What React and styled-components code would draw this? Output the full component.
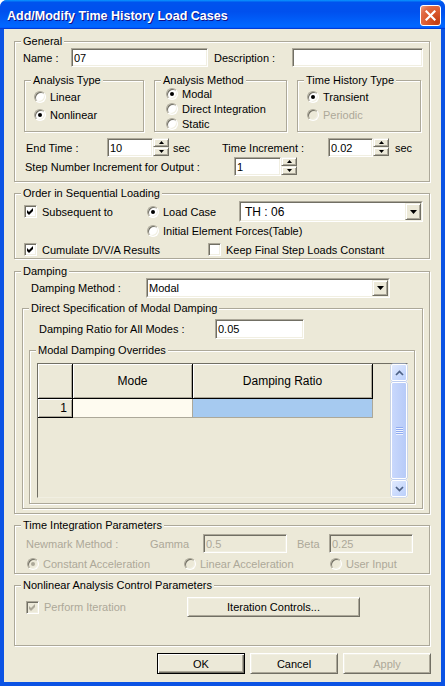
import React from 'react';
import styled, { createGlobalStyle, css } from 'styled-components';

const GlobalStyle = createGlobalStyle`
  html, body { margin: 0; padding: 0; background: #fff; }
  body {
    font-family: "Liberation Sans", Arial, sans-serif;
    font-size: 11px;
    color: #000;
  }
  * { box-sizing: border-box; }
`;

// window chrome
const Window = styled.div`
  width: 445px;
  height: 686px;
  display: flex;
  flex-direction: column;
  background: #0b53e4;
  border-radius: 7px 7px 0 0;
  overflow: hidden;
`;

const TitleBar = styled.div`
  height: 29px;
  flex-shrink: 0;
  display: flex;
  align-items: center;
  justify-content: space-between;
  padding: 2px 4px 0 7px;
  background: linear-gradient(180deg, #0997ff, #0053ee 8%, #0050ee 40%, #0066ff 88%, #0066ff 93%, #005bff 95%, #003dd7 96%, #003dd7);
`;

const Title = styled.span`
  font-family: "Liberation Sans", Arial, sans-serif;
  font-weight: bold;
  font-size: 12.5px;
  color: #fff;
  text-shadow: 1px 1px 0 #0f1089;
  white-space: nowrap;
`;

const CloseBtn = styled.div`
  width: 21px;
  height: 21px;
  border: 1px solid #fff;
  border-radius: 3px;
  background: radial-gradient(circle at 85% 85%, #c33d12 0, #dc5b2f 50%, #e06d47 75%, #f0a58a 100%);
  display: flex;
  align-items: center;
  justify-content: center;
`;

const Client = styled.div`
  flex: 1;
  margin: 0 4px 4px;
  background: #ece9d8;
  display: flex;
  flex-direction: column;
  padding-left: 10px;
`;

// etched group box
const Group = styled.div`
  width: ${p => p.$w}px;
  ${p => p.$h && `height: ${p.$h}px;`}
  margin: ${p => p.$mt || 0}px 0 0 ${p => p.$ml || 0}px;
  padding-bottom: ${p => p.$pb || 0}px;
  border: 1px solid #aca899;
  box-shadow: inset 1px 1px 0 #fff, 1px 1px 0 #fff;
  display: flex;
  flex-direction: column;
  flex-shrink: 0;
`;

const Legend = styled.div`
  align-self: flex-start;
  margin: -7px 0 0 6px;
  padding: 0 2px;
  height: 13px;
  line-height: 13px;
  background: #ece9d8;
  white-space: nowrap;
`;

const Row = styled.div`
  display: flex;
  align-items: center;
  flex-shrink: 0;
  height: ${p => p.$h || 19}px;
  margin-top: ${p => p.$mt || 0}px;
  padding-left: ${p => p.$pl || 0}px;
  gap: ${p => p.$gap || 0}px;
`;

const BoxRow = styled.div`
  display: flex;
  flex-shrink: 0;
  margin-top: ${p => p.$mt || 0}px;
  padding-left: ${p => p.$pl || 0}px;
  gap: 10px;
`;

const Label = styled.span`
  flex-shrink: 0;
  white-space: nowrap;
  width: ${p => (p.$w ? `${p.$w}px` : 'auto')};
  margin-left: ${p => p.$ml || 0}px;
  color: ${p => (p.$disabled ? '#aca899' : '#000')};
`;

const sunken = css`
  border: 1px solid;
  border-color: #aca899 #fff #fff #aca899;
  box-shadow: inset 1px 1px 0 #716f64, inset -1px -1px 0 #f1efe2;
`;

const TextBox = styled.input`
  ${sunken}
  flex-shrink: 0;
  width: ${p => p.$w}px;
  height: ${p => p.$h || 19}px;
  padding: 0 1px 0 2px;
  font: inherit;
  color: ${p => (p.$disabled ? '#aca899' : '#000')};
  background: ${p => (p.$disabled ? '#ece9d8' : '#fff')};
  outline: none;
  align-self: ${p => (p.$top ? 'flex-start' : 'center')};
`;

const Spin = styled.div`
  width: 16px;
  height: 18px;
  align-self: flex-start;
  display: flex;
  flex-direction: column;
  flex-shrink: 0;
`;

const raised = css`
  background: #ece9d8;
  border: 1px solid;
  border-color: #f1efe2 #716f64 #716f64 #f1efe2;
  box-shadow: inset 1px 1px 0 #fff, inset -1px -1px 0 #aca899;
`;

const SpinBtn = styled.div`
  ${raised}
  height: 9px;
  display: flex;
  align-items: center;
  justify-content: center;
`;

const Combo = styled.div`
  border: 1px solid;
  border-color: #aca899 #fff #fff #aca899;
  width: ${p => p.$w}px;
  height: ${p => p.$h}px;
  flex-shrink: 0;
  background: #fff;
`;

const ComboInner = styled.div`
  height: 100%;
  border: 1px solid;
  border-color: #716f64 #f1efe2 #f1efe2 #716f64;
  display: flex;
  align-items: center;
`;

const ComboText = styled.span`
  flex: 1;
  padding-left: ${p => p.$pl || 1}px;
  font-size: ${p => p.$fs || 11}px;
  white-space: nowrap;
`;

const DropBtn = styled.div`
  ${raised}
  width: 16px;
  height: 100%;
  display: flex;
  align-items: center;
  justify-content: center;
`;

const Choice = styled.div`
  display: flex;
  align-items: center;
  flex-shrink: 0;
  height: 15px;
  gap: ${p => p.$gap || 4}px;
  width: ${p => (p.$w ? `${p.$w}px` : 'auto')};
  color: ${p => (p.$disabled ? '#aca899' : '#000')};
  white-space: nowrap;
`;

const RadioList = styled.div`
  display: flex;
  flex-direction: column;
  margin-top: ${p => p.$mt}px;
  padding-left: ${p => p.$pl}px;
  gap: ${p => p.$gap}px;
`;

const RadioCircle = styled.span`
  ${sunken}
  width: 12px;
  height: 12px;
  border-radius: 50%;
  flex-shrink: 0;
  background: ${p => (p.$disabled ? '#ece9d8' : '#fff')};
  display: flex;
  align-items: center;
  justify-content: center;
  &::after {
    content: '';
    display: ${p => (p.$on ? 'block' : 'none')};
    width: 4px;
    height: 4px;
    border-radius: 50%;
    background: ${p => (p.$disabled ? '#aca899' : '#000')};
  }
`;

const CheckSquare = styled.span`
  ${sunken}
  width: 13px;
  height: 13px;
  flex-shrink: 0;
  background: ${p => (p.$disabled ? '#ece9d8' : '#fff')};
  display: flex;
  align-items: center;
  justify-content: center;
`;

const Button = styled.button`
  ${raised}
  border-color: #fff #716f64 #716f64 #fff;
  box-shadow: inset 1px 1px 0 #f1efe2, inset -1px -1px 0 #aca899;
  width: ${p => p.$w}px;
  height: ${p => p.$h || 21}px;
  flex-shrink: 0;
  padding: 0;
  font: inherit;
  color: ${p => (p.disabled ? '#aca899' : '#000')};
  ${p => p.$default && css`
    border-color: #000;
    box-shadow: inset 1px 1px 0 #fff, inset -1px -1px 0 #716f64, inset -2px -2px 0 #aca899;
  `}
`;

const ButtonBar = styled.div`
  display: flex;
  justify-content: flex-end;
  gap: 5px;
  margin-top: 7px;
  padding-right: 10px;
`;

// grid
const Grid = styled.div`
  width: 371px;
  height: 135px;
  margin: 6px 0 0 7px;
  flex-shrink: 0;
  border: 1px solid;
  border-color: #716f64 #f1efe2 #f1efe2 #716f64;
  background: #ece9d8;
  display: flex;
`;

const Table = styled.div`
  display: grid;
  grid-template-columns: 35px 120px 180px;
  grid-template-rows: 35px 19px;
  align-content: start;
`;

const HeadCell = styled.div`
  display: flex;
  align-items: center;
  justify-content: ${p => p.$align || 'center'};
  padding: 0 5px;
  background: #ece9d8;
  border-right: 1px solid #000;
  border-bottom: 1px solid #000;
  box-shadow: inset 1px 1px 0 #fff, inset -1px -1px 0 #aca899;
  font-family: "Liberation Sans", Arial, sans-serif;
  font-size: 12px;
`;

const DataCell = styled.div`
  background: ${p => p.$bg};
  border-right: 1px solid #aca899;
  border-bottom: 1px solid #aca899;
`;

const ScrollBar = styled.div`
  width: 16px;
  margin-left: auto;
  display: flex;
  flex-direction: column;
  gap: 1px;
  background: #f4f3ee;
`;

const ScrollBtn = styled.div`
  height: 17px;
  flex-shrink: 0;
  border: 1px solid #fff;
  border-radius: 2px;
  background: linear-gradient(135deg, #e1eafe, #bacffb);
  box-shadow: 0 0 0 0.5px #b4c7f3;
  display: flex;
  align-items: center;
  justify-content: center;
`;

const Thumb = styled.div`
  flex: 1;
  border: 1px solid #fff;
  border-radius: 2px;
  background: linear-gradient(90deg, #c9d8fc, #b7cbf8);
  box-shadow: 0 0 0 0.5px #a5bdf0;
  display: flex;
  align-items: center;
  justify-content: center;
`;

const Tri = ({ down, w = 7, h = 4, color = '#000' }) => (
  <svg width={w} height={h} viewBox={`0 0 ${w} ${h}`}>
    <polygon
      points={down ? `0,0 ${w},0 ${w / 2},${h}` : `0,${h} ${w},${h} ${w / 2},0`}
      fill={color}
    />
  </svg>
);

const Chevron = ({ down }) => (
  <svg width="9" height="6" viewBox="0 0 9 6">
    <polyline
      points={down ? '1,1 4.5,4.5 8,1' : '1,5 4.5,1.5 8,5'}
      fill="none"
      stroke="#4d6185"
      strokeWidth="1.7"
    />
  </svg>
);

const Radio = ({ on, disabled, children, w }) => (
  <Choice $w={w} $disabled={disabled}>
    <RadioCircle $on={on} $disabled={disabled} />
    {children}
  </Choice>
);

const Check = ({ on, disabled, children, w }) => (
  <Choice $w={w} $gap={5} $disabled={disabled}>
    <CheckSquare $disabled={disabled}>
      {on && (
        <svg width="9" height="9" viewBox="0 0 9 9">
          <polygon points="1,3 3,5 7,1 7,4 3,8 1,6" fill={disabled ? '#aca899' : '#000'} />
        </svg>
      )}
    </CheckSquare>
    {children}
  </Choice>
);

const Spinner = () => (
  <Spin>
    <SpinBtn><Tri w={5} h={3} /></SpinBtn>
    <SpinBtn><Tri down w={5} h={3} /></SpinBtn>
  </Spin>
);

const ComboBox = ({ w, h, value, fs, pl }) => (
  <Combo $w={w} $h={h}>
    <ComboInner>
      <ComboText $fs={fs} $pl={pl}>{value}</ComboText>
      <DropBtn><Tri down /></DropBtn>
    </ComboInner>
  </Combo>
);

export default function App() {
  return (
    <>
      <GlobalStyle />
      <Window>
        <TitleBar>
          <Title>Add/Modify Time History Load Cases</Title>
          <CloseBtn>
            <svg width="11" height="11" viewBox="0 0 11 11">
              <path d="M1.5 1.5 L9.5 9.5 M9.5 1.5 L1.5 9.5" stroke="#fff" strokeWidth="2.2" strokeLinecap="square" />
            </svg>
          </CloseBtn>
        </TitleBar>

        <Client>
          {/* General */}
          <Group $w={416} $mt={12} $pb={5}>
            <Legend>General</Legend>
            <Row $pl={8}>
              <Label $w={48}>Name :</Label>
              <TextBox $w={137} readOnly value="07" />
              <Label $ml={6} $w={78}>Description :</Label>
              <TextBox $w={131} readOnly value="" />
            </Row>
            <BoxRow $mt={13} $pl={9}>
              <Group $w={120} $h={52}>
                <Legend>Analysis Type</Legend>
                <RadioList $mt={2} $pl={9} $gap={3}>
                  <Radio>Linear</Radio>
                  <Radio on>Nonlinear</Radio>
                </RadioList>
              </Group>
              <Group $w={133} $h={52}>
                <Legend>Analysis Method</Legend>
                <RadioList $mt={-1} $pl={11} $gap={0}>
                  <Radio on>Modal</Radio>
                  <Radio>Direct Integration</Radio>
                  <Radio>Static</Radio>
                </RadioList>
              </Group>
              <Group $w={124} $h={52}>
                <Legend>Time History Type</Legend>
                <RadioList $mt={2} $pl={9} $gap={3}>
                  <Radio on>Transient</Radio>
                  <Radio disabled>Periodic</Radio>
                </RadioList>
              </Group>
            </BoxRow>
            <Row $mt={6} $pl={11}>
              <Label $w={81}>End Time :</Label>
              <TextBox $w={46} $top readOnly value="10" />
              <Spinner />
              <Label $ml={4} $w={49}>sec</Label>
              <Label $w={106}>Time Increment :</Label>
              <TextBox $w={45} $top readOnly value="0.02" />
              <Spinner />
              <Label $ml={6}>sec</Label>
            </Row>
            <Row $pl={10}>
              <Label $w={209}>Step Number Increment for Output :</Label>
              <TextBox $w={47} $top readOnly value="1" />
              <Spinner />
            </Row>
          </Group>

          {/* Order in Sequential Loading */}
          <Group $w={416} $mt={11} $pb={1}>
            <Legend>Order in Sequential Loading</Legend>
            <Row $h={21} $mt={1} $pl={9}>
              <Check on w={123}>Subsequent to</Check>
              <Radio on w={92}>Load Case</Radio>
              <ComboBox w={184} h={21} value="TH : 06" fs={12} pl={4} />
            </Row>
            <Row $h={15} $mt={1} $pl={132}>
              <Radio>Initial Element Forces(Table)</Radio>
            </Row>
            <Row $h={15} $mt={4} $pl={9}>
              <Check on w={184}>Cumulate D/V/A Results</Check>
              <Check>Keep Final Step Loads Constant</Check>
            </Row>
          </Group>

          {/* Damping */}
          <Group $w={416} $mt={12} $pb={4}>
            <Legend>Damping</Legend>
            <Row $h={20} $pl={16}>
              <Label $w={115}>Damping Method :</Label>
              <ComboBox w={244} h={20} value="Modal" />
            </Row>
            <Group $w={401} $mt={10} $ml={7} $pb={4}>
              <Legend>Direct Specification of Modal Damping</Legend>
              <Row $h={20} $mt={4} $pl={16}>
                <Label $w={176}>Damping Ratio for All Modes :</Label>
                <TextBox $w={89} $h={20} readOnly value="0.05" />
              </Row>
              <Group $w={386} $mt={11} $ml={6} $pb={5}>
                <Legend>Modal Damping Overrides</Legend>
                <Grid>
                  <Table>
                    <HeadCell />
                    <HeadCell>Mode</HeadCell>
                    <HeadCell>Damping Ratio</HeadCell>
                    <HeadCell $align="flex-end">1</HeadCell>
                    <DataCell $bg="#fefbf0" />
                    <DataCell $bg="#a6caf0" />
                  </Table>
                  <ScrollBar>
                    <ScrollBtn><Chevron /></ScrollBtn>
                    <Thumb>
                      <svg width="7" height="8" viewBox="0 0 7 8">
                        <path d="M0 0.5 H7 M0 2.5 H7 M0 4.5 H7 M0 6.5 H7" stroke="#8faaf0" strokeWidth="1" />
                        <path d="M0 1.5 H7 M0 3.5 H7 M0 5.5 H7 M0 7.5 H7" stroke="#eef3fe" strokeWidth="1" />
                      </svg>
                    </Thumb>
                    <ScrollBtn><Chevron down /></ScrollBtn>
                  </ScrollBar>
                </Grid>
              </Group>
            </Group>
          </Group>

          {/* Time Integration Parameters */}
          <Group $w={416} $mt={11} $pb={2}>
            <Legend>Time Integration Parameters</Legend>
            <Row $mt={2} $pl={11}>
              <Label $w={124} $disabled>Newmark Method :</Label>
              <Label $w={53} $disabled>Gamma</Label>
              <TextBox $w={84} $disabled readOnly value="0.5" />
              <Label $ml={10} $w={32} $disabled>Beta</Label>
              <TextBox $w={84} $disabled readOnly value="0.25" />
            </Row>
            <Row $h={15} $mt={3} $pl={12}>
              <Radio on disabled w={157}>Constant Acceleration</Radio>
              <Radio disabled w={146}>Linear Acceleration</Radio>
              <Radio disabled>User Input</Radio>
            </Row>
          </Group>

          {/* Nonlinear Analysis Control Parameters */}
          <Group $w={416} $mt={11} $pb={28}>
            <Legend>Nonlinear Analysis Control Parameters</Legend>
            <Row $h={20} $mt={5} $pl={11}>
              <Check on disabled w={161}>Perform Iteration</Check>
              <Button $w={173} $h={20}>Iteration Controls...</Button>
            </Row>
          </Group>

          <ButtonBar>
            <Button $w={88} $default>OK</Button>
            <Button $w={88}>Cancel</Button>
            <Button $w={88} disabled>Apply</Button>
          </ButtonBar>
        </Client>
      </Window>
    </>
  );
}
